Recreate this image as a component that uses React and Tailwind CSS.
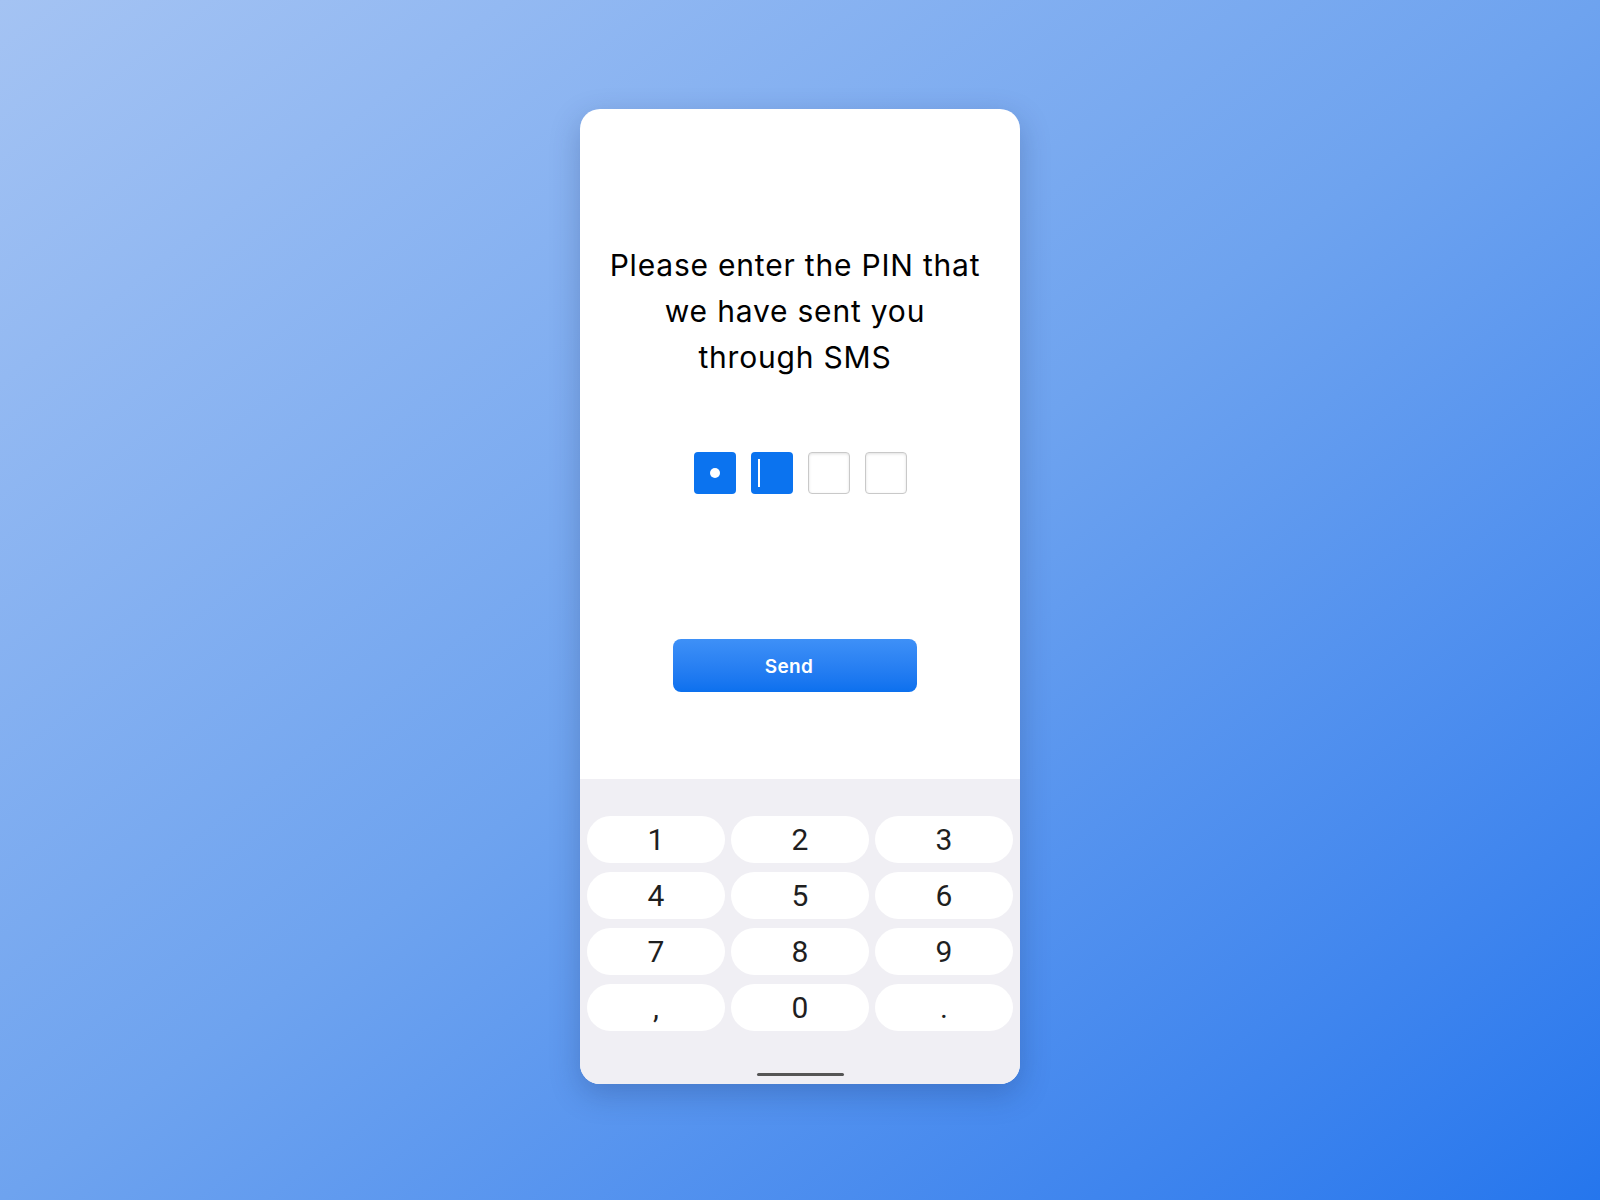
import React from "react";

const keys = ["1", "2", "3", "4", "5", "6", "7", "8", "9", ",", "0", "."];

function PinBox({ state }) {
  // filled = dot, active = cursor, empty = grey outline
  if (state === "filled") {
    return (
      <div className="w-[42px] h-[42px] rounded-[4px] bg-[#0b73ef] flex items-center justify-center">
        <div className="w-[10px] h-[10px] rounded-full bg-white" />
      </div>
    );
  }
  if (state === "active") {
    return (
      <div className="w-[42px] h-[42px] rounded-[4px] bg-[#0b73ef] flex items-center pl-[7px]">
        <div className="w-[2px] h-[28px] bg-white" />
      </div>
    );
  }
  return (
    <div className="w-[42px] h-[42px] rounded-[4px] bg-white border border-[#c9c9c9] shadow-[inset_0_1px_3px_rgba(0,0,0,0.12)]" />
  );
}

export default function App() {
  return (
    <div className="min-h-screen w-full bg-linear-to-br from-[#a4c3f3] via-[#6ea3ef] to-[#2576ed] flex justify-center pt-[109px]">
      <div className="w-[440px] h-[975px] rounded-[20px] bg-white overflow-hidden flex flex-col shadow-[0_10px_30px_rgba(20,40,90,0.25)]">
        {/* Haut : message + PIN + bouton */}
        <div className="h-[670px] flex flex-col items-center pt-[133px]">
          <p
            className="pr-[10px] text-center text-[30px] leading-[46px] tracking-[0.8px] text-black w-full"
            style={{ fontFamily: "Inter, 'Open Sans', sans-serif" }}
          >
            Please enter the PIN that
            <br />
            we have sent you
            <br />
            through SMS
          </p>

          <div className="mt-[72px] flex gap-[15px]">
            <PinBox state="filled" />
            <PinBox state="active" />
            <PinBox state="empty" />
            <PinBox state="empty" />
          </div>

          <div className="mt-[145px] pr-[10px]">
            <button
              className="w-[244px] h-[53px] rounded-[8px] bg-linear-to-b from-[#3e90f7] to-[#0b70ee] text-white text-[19px] font-semibold tracking-[0.3px] pr-[12px] pt-[4px]"
              style={{ fontFamily: "Inter, 'Open Sans', sans-serif" }}
            >
              Send
            </button>
          </div>
        </div>

        {/* Clavier numérique */}
        <div className="flex-1 bg-[#f0eff4] flex flex-col pt-[37px] px-[7px]">
          <div className="grid grid-cols-3 gap-x-[6px] gap-y-[9px]">
            {keys.map((k) => (
              <div
                key={k}
                className="h-[47px] rounded-full bg-white flex items-center justify-center text-[30px] text-[#1f1f1f]"
                style={{ fontFamily: "Roboto, 'Liberation Sans', sans-serif" }}
              >
                {k}
              </div>
            ))}
          </div>
          <div className="mt-auto mb-[8px] flex justify-center">
            <div className="w-[87px] h-[3px] rounded-full bg-[#555555]" />
          </div>
        </div>
      </div>
    </div>
  );
}
